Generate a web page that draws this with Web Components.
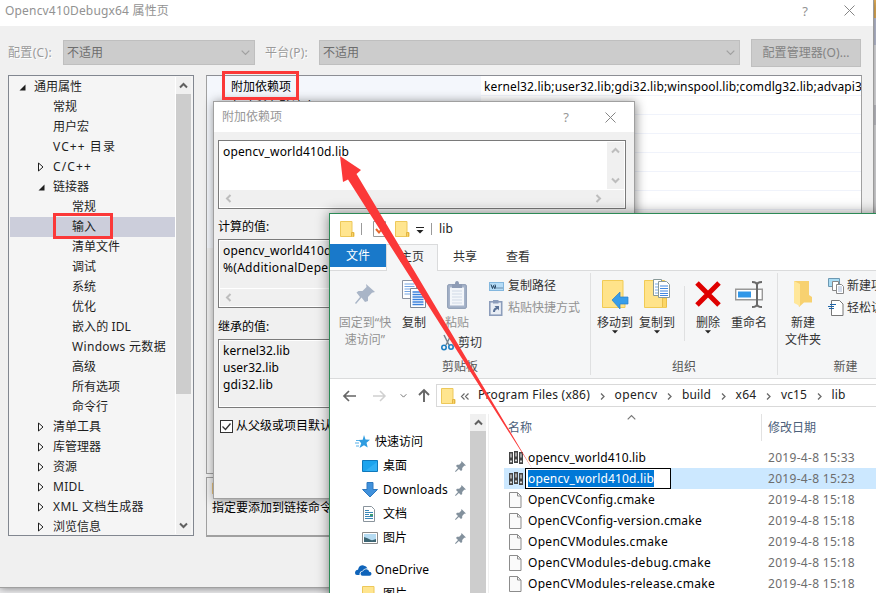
<!DOCTYPE html>
<html lang="zh-CN">
<head>
<meta charset="utf-8">
<title>Opencv410Debugx64 属性页</title>
<style>
  html, body {
    margin: 0;
    width: 876px;
    height: 593px;
    overflow: hidden;
  }

  body {
    position: relative;
    background: linear-gradient(#f0b95f 0 18px, #c9cee4 18px 45px, #f2f2f5 45px 105px, #cfcfd6 105px 125px, #ececee 125px);
    font: 12px/20px "Noto Sans", "Noto Sans CJK SC", sans-serif;
    color: #1e1e1e;
  }

  property-page { position: absolute; left: 0; top: 0; }
  deps-dialog { position: absolute; left: 213px; top: 101px; }
  explorer-window { position: absolute; left: 329px; top: 213px; }
  .mark { position: absolute; box-sizing: border-box; border: 3px solid #fb3838; }
  .arrow { position: absolute; left: 0; top: 0; }
</style>
</head>
<body>
  <property-page></property-page>
  <deps-dialog></deps-dialog>
  <explorer-window></explorer-window>

  <div class="mark" style="left:222px;top:71px;width:77px;height:29px"></div>
  <div class="mark" style="left:53px;top:213px;width:60px;height:26px"></div>
  <svg class="arrow" width="876" height="593">
    <path d="M340 156L361 170L356.5 174L533 470L348 179.5L343 182Z" fill="#fb3838"/>
  </svg>

<script>
const FOLDER = '<path d="M.5 .5h11.5v11h2v4H.5z" fill="#ffe58f" stroke="#edc85a"/><path d="M11.500 15.500v-4h2v4" fill="#f9d36a" stroke="#e3b540"/>';
const PAGE = '<path d="M.5 .5h8l3.500 3.500v11.500H.5z" fill="#fafafa" stroke="#8c8c8c"/><path d="M8.500 .5v3.500h3.500" fill="none" stroke="#8c8c8c"/>';

// [width, height, markup]
const ICONS = {
  close: [11, 11, '<path d="M.5 .5l10 10M10.500 .5l-10 10" stroke="#858585" fill="none"/>'],
  down: [9, 6, '<path d="M.7 .7l3.800 3.800L8.300 .7" fill="none" stroke="currentColor" stroke-width="1.200"/>'],
  up: [9, 6, '<path d="M.7 5.300l3.800-3.800 3.800 3.800" fill="none" stroke="currentColor" stroke-width="1.200"/>'],
  sUp: [9, 7, '<path d="M1 5.500L4.500 2 8 5.500" fill="none" stroke="currentColor" stroke-width="2"/>'],
  sDown: [9, 7, '<path d="M1 1.500L4.500 5 8 1.500" fill="none" stroke="currentColor" stroke-width="2"/>'],
  sLeft: [7, 9, '<path d="M5.500 1L2 4.500 5.500 8" fill="none" stroke="currentColor" stroke-width="2"/>'],
  sRight: [7, 9, '<path d="M1.500 1L5 4.500 1.500 8" fill="none" stroke="currentColor" stroke-width="2"/>'],
  open: [7, 7, '<path d="M6.500 .5v6h-6z" fill="#1e1e1e"/>'],
  closed: [6, 10, '<path d="M.5 1v8L5 5z" fill="#fff" stroke="#1e1e1e"/>'],
  check: [13, 13, '<rect x=".5" y=".5" width="12" height="12" fill="#fff" stroke="#333"/><path d="M2.500 6.500l3 3 5-6" fill="none" stroke="#333" stroke-width="1.300"/>'],
  folder: [14, 16, FOLDER],
  tick: [14, 16, '<path d="M.5 .5h12v15H.5z" fill="#fff" stroke="#999"/><path d="M3 8l3 3.500 4-5" fill="none" stroke="#e8682c" stroke-width="2"/>'],
  menu: [8, 7, '<path d="M0 .5h8" stroke="#222"/><path d="M.5 3h7L4 6.500z" fill="#222"/>'],
  caret: [6, 4, '<path d="M0 .3h6L3 3.500z" fill="#222"/>'],
  pinBig: [20, 20, '<path d="M11 0l9 8-3 .7-4 4.300v4l-3 1-3.500-4.500L1 20l-1-1 5-6L1.500 8.500 3.500 7h4L11.500 3z" fill="#a9b5c7"/>'],
  copyBig: [24, 28, '<path d="M.5 .5h14v18H.5z" fill="#fff" stroke="#8b93a1"/><path d="M2.500 4h10M2.500 6.500h10M2.500 9h10M2.500 11.500h10M2.500 14h10" stroke="#74a5e3"/><path d="M8.500 8.500h11l4 4v15h-15z" fill="#fff" stroke="#7c8796"/><path d="M10.500 12h8M10.500 14.500h11M10.500 17h11M10.500 19.500h11M10.500 22h11M10.500 24.500h11" stroke="#3c82dd" stroke-width="1.400"/>'],
  pasteBig: [20, 29, '<rect x=".7" y="4.700" width="18.600" height="23.600" rx="1" fill="#a7b4ca" stroke="#8494ae"/><path d="M3 7.500h14v18H3z" fill="#f3f6fa"/><path d="M5 11h10M5 14h10M5 17h10M5 20h10M5 23h10" stroke="#d0d9e6"/><path d="M5 4h3a2 3 0 0 1 4 0h3v4H5z" fill="#8e9cb5"/>'],
  cut: [13, 16, '<path d="M3 0l5 10M10 0L5 10" stroke="#78858f" stroke-width="1.500"/><circle cx="3" cy="12.500" r="2.200" fill="none" stroke="#1e7fc2" stroke-width="1.600"/><circle cx="10" cy="12" r="2.200" fill="none" stroke="#1e7fc2" stroke-width="1.600"/>'],
  path: [15, 9, '<rect x=".5" y=".5" width="14" height="8" fill="#b5dcf7" stroke="#83b7de"/><path d="M2 2.500l1.500 4 1-3 1.500 3.500M6 2.500l1 4" stroke="#223f5c" fill="none"/><path d="M8.500 6h1M10.500 6h1M12.500 6h1" stroke="#223f5c"/>'],
  link: [14, 16, '<rect x=".8" y="1.800" width="11.900" height="13.400" fill="#e9eef5" stroke="#8c9dbb" stroke-width="1.600"/><path d="M4 0h5.500v3.500H4z" fill="#8c9dbb"/><path d="M4 12q0-4 3-4.500L5.500 6H10v4.500L8.800 9Q6 9.500 6 12z" fill="#5a7297"/>'],
  moveTo: [26, 29, '<path d="M.5 .5h20.500v18h2v9H.5z" fill="#ffe38a" stroke="#f1cb55"/><path d="M10 21l8-8v5h8v7h-8v5z" fill="#389de9" stroke="#2a7fcb" stroke-width=".7" transform="translate(0 -1)"/>'],
  copyTo: [26, 30, '<path d="M.5 1.500h20v18h2v9H.5z" fill="#ffe38a" stroke="#f1cb55"/><path d="M18.500 28v-9h4v9" fill="#fcd666" stroke="#e9bf4b"/><path d="M9.500 .5h8v16h-8z" fill="#fff" stroke="#899"/><path d="M11 5h5M11 8h5M11 11h5M11 14h5" stroke="#78a9e5"/><path d="M14.500 2.500h8l3 3v13h-11z" fill="#fff" stroke="#899"/><path d="M16 7h8M16 9.500h8M16 12h8M16 14.500h8M16 16.500h8" stroke="#4388e0" stroke-width="1.200"/>'],
  del: [26, 26, '<path d="M2 2l22 22M24 2L2 24" stroke="#df0000" stroke-width="5"/>'],
  rename: [28, 27, '<path d="M.7 8.200h26.600v10.600H.7z" fill="#fff" stroke="#989898" stroke-width="1.400"/><path d="M3 10.500h13v6H3z" fill="#3197e8"/><path d="M17 1q5 0 5 3 0-3 5-3M17 26q5 0 5-3 0 3 5 3M22 3v21" fill="none" stroke="#696969" stroke-width="2"/>'],
  newFolder: [20, 28, '<path d="M1 1h15v14l3 2v5.500h-8L6 27z" fill="#f7d170"/><path d="M1 1l6 3v22l-6-3z" fill="#ffe79a"/>'],
  newItem: [16, 16, '<path d="M.5 .5h11v8H.5z" fill="#a9dcf4" stroke="#6c98b2"/><path d="M4.500 3.500h6v9h-6z" fill="#fff" stroke="#888"/><path d="M8.500 6.500h5l2 2v7h-7z" fill="#fff" stroke="#888"/><path d="M10 9h4M10 11h4M10 13h4" stroke="#a8b8d6"/>'],
  easy: [16, 16, '<path d="M3.500 .5h8l3.500 3.500v11.500H3.500z" fill="#fff" stroke="#777"/><path d="M2 4.500h6M0 6.500h6M1 8.500h5" stroke="#1e64a8" stroke-width="1.200"/>'],
  back: [13, 12, '<path d="M6 1L1 6l5 5M1 6h12" fill="none" stroke="currentColor" stroke-width="1.700"/>'],
  forward: [13, 12, '<path d="M7 1l5 5-5 5M12 6H0" fill="none" stroke="currentColor" stroke-width="1.500"/>'],
  upArrow: [12, 13, '<path d="M1 6l5-5 5 5M6 1v12" fill="none" stroke="currentColor" stroke-width="1.900"/>'],
  crumb: [5, 7, '<path d="M1 .5l3 3-3 3" fill="none" stroke="#6a6a6a" stroke-width="1.300"/>'],
  more: [8, 7, '<path d="M3.500 .5l-3 3 3 3M7.500 .5l-3 3 3 3" fill="none" stroke="#6a6a6a" stroke-width="1.200"/>'],
  star: [15, 14, '<path d="M9 0l1.500 4.500 4.500.3-3.500 3 1.200 4.700L9 10.300 4.500 13l1.700-4.700L3.500 5l4.200-.3z" fill="#2f9ce0"/><path d="M1 5.500h3M0 8h4M1 11h3" stroke="#56b0e8"/>'],
  desktop: [16, 12, '<path d="M.5 .5h15v11H.5z" fill="#1ca4ee" stroke="#0f78bb"/><path d="M15 2v9H3z" fill="#32b0f4"/>'],
  download: [16, 16, '<path d="M5 .5h6v7h4.500L8 15 .5 7.500H5z" fill="#4091dc" stroke="#2e78bf"/>'],
  doc: [14, 16, '<path d="M1.500 .5h8l3 3v12h-11z" fill="#fff" stroke="#8a949c"/><path d="M3 4.500h4M3 6.500h8M3 8.500h4M3 10.500h8M3 12.500h8" stroke="#3a87b8"/><path d="M8 8h3v2H8z" fill="#3a9a72"/>'],
  pic: [16, 12, '<path d="M.5 .5h15v11H.5z" fill="#fff" stroke="#8b8b8b"/><path d="M2 2h12v8H2z" fill="#b5dbf2"/><path d="M2 5q4 1 6 2.500T14 7v3H2z" fill="#3c6573"/>'],
  cloud: [17, 11, '<path d="M0 8q0-3 3-3.200Q4 0 8.500 .4q3 .3 4 3Q9 3 7.300 6q-3 .3-2.800 4H2Q0 10 0 8z" fill="#0f64ba"/><path d="M5.500 8.500q0-2 2.500-2.200 1-2.300 3.500-2 2.300.2 2.700 2.500 2.300.2 2.300 2t-2 2H7.500q-2 0-2-2.300z" fill="#0f64ba"/>'],
  pin: [11, 11, '<path d="M6.500 0L11 4.500l-1.800.3-2 2.200v2L6 10 3.900 8 .7 11 0 10.300 3 7 1 5l1-1.200h2.200l2-2z" fill="#83919d"/>'],
  lib: [14, 13, '<path d="M0 1h4v12H0zM5 0h4v12H5zM10 1h4v12h-4z" fill="#444"/><path d="M1.500 2.500h1v4h-1zM6.500 1.500h1v4h-1zM11.500 2.500h1v4h-1zM1.200 9.500h1.600v1.800H1.200zM6.200 8.500h1.600v1.800H6.200zM11.200 9.500h1.600v1.800h-1.600z" fill="#fff"/>'],
  page: [13, 16, PAGE]
};

class UiIcon extends HTMLElement {
  connectedCallback() {
    if (!this.shadowRoot) this.attachShadow({ mode: 'open' });
    const [w, h, body] = ICONS[this.getAttribute('name')];
    this.shadowRoot.innerHTML = `
      <style>
        :host { display: block; flex: none; width: ${w}px; height: ${h}px; }
        svg { display: block; overflow: visible; }
      </style>
      <svg width="${w}" height="${h}" viewBox="0 0 ${w} ${h}">${body}</svg>`;
  }
}
customElements.define('ui-icon', UiIcon);

// One line of text; "w" spreads the letters over a fixed width
class UiLabel extends HTMLElement {
  connectedCallback() {
    if (!this.shadowRoot) this.attachShadow({ mode: 'open' });
    this.shadowRoot.innerHTML = `
      <style>:host { display: block; flex: none; white-space: nowrap; width: max-content; }</style>
      <slot></slot>`;
    const w = Number(this.getAttribute('w'));
    if (w) {
      const natural = this.getBoundingClientRect().width;
      this.style.letterSpacing = `${(w - natural) / this.textContent.length}px`;
    }
  }
}
customElements.define('ui-label', UiLabel);

class ScrollBar extends HTMLElement {
  connectedCallback() {
    this.attachShadow({ mode: 'open' });
    const horizontal = this.hasAttribute('horizontal');
    const thumb = this.getAttribute('thumb');
    this.shadowRoot.innerHTML = `
      <style>
        :host {
          display: flex;
          flex: none;
          flex-direction: ${horizontal ? 'row' : 'column'};
          justify-content: space-between;
          align-items: center;
          background: #f0f0f0;
          color: #606060;
        }
        :host([disabled]) { color: #bdbdbd; }
        .end { flex: none; display: grid; place-items: center; width: 17px; height: 17px; }
        .thumb { width: 100%; height: ${thumb}px; background: #cdcdcd; margin-bottom: auto; flex: none; }
      </style>
      <div class="end"><ui-icon name="${horizontal ? 'sLeft' : 'sUp'}"></ui-icon></div>
      ${thumb ? '<div class="thumb"></div>' : ''}
      <div class="end"><ui-icon name="${horizontal ? 'sRight' : 'sDown'}"></ui-icon></div>`;
  }
}
customElements.define('scroll-bar', ScrollBar);

class ComboBox extends HTMLElement {
  connectedCallback() {
    this.attachShadow({ mode: 'open' });
    this.shadowRoot.innerHTML = `
      <style>
        :host {
          display: flex;
          align-items: center;
          justify-content: space-between;
          box-sizing: border-box;
          height: 25px;
          padding: 0 4px 0 3px;
          border: 1px solid #bfbfbf;
          background: #ccc;
          color: #6d6d6d;
        }
        ui-icon { color: #a0a0a0; }
      </style>
      <ui-label><slot></slot></ui-label><ui-icon name="down"></ui-icon>`;
  }
}
customElements.define('combo-box', ComboBox);

class TreeItem extends HTMLElement {
  connectedCallback() {
    this.attachShadow({ mode: 'open' });
    const level = Number(this.getAttribute('level'));
    const state = this.getAttribute('state');
    this.shadowRoot.innerHTML = `
      <style>
        :host { display: flex; align-items: center; height: 20px; padding-left: ${9 + level * 19}px; }
        :host([selected]) { background: #cccedb; }
        .toggle { width: 15px; flex: none; }
      </style>
      <div class="toggle">${state ? `<ui-icon name="${state}"></ui-icon>` : ''}</div>
      <ui-label w="${this.getAttribute('w') || ''}">${this.getAttribute('label')}</ui-label>`;
  }
}
customElements.define('tree-item', TreeItem);

const TREE = [
  [0, '通用属性', 'open'], [1, '常规'], [1, '用户宏'], [1, 'VC++ 目录', '', 63], [1, 'C/C++', 'closed', 39],
  [1, '链接器', 'open'], [2, '常规'], [2, '输入', 'selected'], [2, '清单文件'], [2, '调试'], [2, '系统'], [2, '优化'],
  [2, '嵌入的 IDL', '', 59], [2, 'Windows 元数据', '', 94], [2, '高级'], [2, '所有选项'], [2, '命令行'],
  [1, '清单工具', 'closed'], [1, '库管理器', 'closed'], [1, '资源', 'closed'], [1, 'MIDL', 'closed', 31],
  [1, 'XML 文档生成器', 'closed', 91], [1, '浏览信息', 'closed']
];

class PropertyPage extends HTMLElement {
  connectedCallback() {
    this.attachShadow({ mode: 'open' });
    const items = TREE.map(([level, label, state, w]) => {
      const attr = state === 'selected' ? 'selected' : state ? `state="${state}"` : '';
      return `<tree-item level="${level}" label="${label}" w="${w || ''}" ${attr}></tree-item>`;
    }).join('');
    this.shadowRoot.innerHTML = `
      <style>
        :host {
          display: block;
          box-sizing: border-box;
          width: 874px;
          height: 588px;
          border-right: 1px solid #9b9b9b;
          border-bottom: 1px solid #a0a0a0;
          background: #f0f0f0;
          box-shadow: 0 0 8px rgba(0, 0, 0, .5);
        }
        header {
          display: flex;
          align-items: center;
          box-sizing: border-box;
          height: 26px;
          padding: 0 18px 5px 5px;
          background: #fff;
          color: #929292;
        }
        .help { margin-left: auto; margin-right: 36px; font-size: 13px; }
        .config { display: flex; align-items: flex-start; padding: 14px 0 0 8px; height: 35px; }
        .config ui-label { margin-top: 3px; color: #9a9a9a; text-shadow: 1px 1px #fff; }
        .c1 { width: 192px; margin-left: 11px; }
        .p { margin-left: 10px; }
        .c2 { width: 421px; margin-left: 11px; }
        .btn {
          box-sizing: border-box;
          width: 110px;
          height: 28px;
          margin: -1px 0 0 11px;
          border: 1px solid #bfbfbf;
          background: #ccc;
          display: grid;
          place-items: center;
        }
        .config .btn ui-label { margin: 0; color: #838383; text-shadow: none; }
        .main { display: flex; gap: 12px; padding-left: 8px; }
        .tree {
          display: flex;
          box-sizing: border-box;
          width: 186px;
          height: 461px;
          border: 1px solid #828790;
          padding: 1px;
          background: #f5f5f5;
          overflow: hidden;
        }
        .items { flex: 1; }
        .tree scroll-bar { width: 16px; border-left: 1px solid #fff; margin-right: 1px; box-sizing: border-box; }
        .right { display: flex; flex-direction: column; gap: 3px; width: 656px; }
        .grid {
          box-sizing: border-box;
          height: 399px;
          border: 1px solid #a0a0a0;
          border-top-color: #8c8e94;
          overflow: hidden;
          display: grid;
          grid-template-columns: 274px 1fr;
          background: linear-gradient(90deg, #f4f7fc 274px, transparent 0) 0 0 / 100% 172px no-repeat, #f0f0f0;
        }
        .names { padding: 1px 0 0 24px; color: #000; }
        .names ui-label { height: 20px; }
        .values {
          padding: 1px 0 0 3px;
          color: #000;
          background: repeating-linear-gradient(#fff 0 18px, #f0f3fb 18px 19px) 0 1px;
        }
        .desc {
          box-sizing: border-box;
          height: 60px;
          border: 1px solid #a0a0a0;
          border-bottom-width: 2px;
          padding: 1px 0 0 5px;
          color: #000;
        }
        .desc ui-label { line-height: 19px; }
        .desc b { display: block; height: 17px; padding-top: 2px; line-height: 16px; }
      </style>
      <header>
        <ui-label w="164">Opencv410Debugx64 属性页</ui-label>
        <ui-label class="help">?</ui-label>
        <ui-icon name="close"></ui-icon>
      </header>
      <div class="config">
        <ui-label w="44">配置(C):</ui-label>
        <combo-box class="c1">不适用</combo-box>
        <ui-label class="p" w="43">平台(P):</ui-label>
        <combo-box class="c2">不适用</combo-box>
        <div class="btn"><ui-label w="87">配置管理器(O)...</ui-label></div>
      </div>
      <div class="main">
        <div class="tree">
          <div class="items">${items}</div>
          <scroll-bar thumb="300"></scroll-bar>
        </div>
        <div class="right">
          <div class="grid">
            <div class="names"><ui-label>附加依赖项</ui-label><ui-label>忽略所有默认库</ui-label></div>
            <div class="values"><ui-label w="378">kernel32.lib;user32.lib;gdi32.lib;winspool.lib;comdlg32.lib;advapi3</ui-label></div>
          </div>
          <div class="desc"><b>附加依赖项</b><ui-label>指定要添加到链接命令</ui-label></div>
        </div>
      </div>`;
  }
}
customElements.define('property-page', PropertyPage);

class TextArea extends HTMLElement {
  connectedCallback() {
    this.attachShadow({ mode: 'open' });
    const vertical = this.hasAttribute('vertical');
    const horizontal = this.hasAttribute('scroll');
    this.shadowRoot.innerHTML = `
      <style>
        :host {
          display: flex;
          flex-direction: column;
          box-sizing: border-box;
          height: 69px;
          border: 1px solid #7a7a7a;
          box-shadow: inset 0 0 0 1px #fff;
          padding: 1px;
          color: #000;
          line-height: 17px;
        }
        :host([vertical]) { background: #fff; }
        .top { display: flex; flex: 1; justify-content: space-between; min-height: 0; }
        .text { padding: 1px 0 0 3px; }
        .v { width: 17px; }
        .h { height: 17px; border-top: 1px solid #fff; padding-right: ${vertical ? 17 : 0}px; }
      </style>
      <div class="top"><div class="text"><slot></slot></div>
      ${vertical ? '<scroll-bar class="v" disabled></scroll-bar>' : ''}</div>
      ${horizontal ? '<scroll-bar class="h" horizontal disabled></scroll-bar>' : ''}`;
  }
}
customElements.define('text-area', TextArea);

class DepsDialog extends HTMLElement {
  connectedCallback() {
    this.attachShadow({ mode: 'open' });
    this.shadowRoot.innerHTML = `
      <style>
        :host {
          display: block;
          box-sizing: border-box;
          width: 422px;
          height: 398px;
          border: 1px solid #a0a0a0;
          background: #f0f0f0;
          color: #000;
          box-shadow: 1px 1px 10px rgba(0, 0, 0, .45);
        }
        header {
          display: flex;
          align-items: center;
          height: 30px;
          padding: 0 18px 0 8px;
          background: #fff;
          color: #979797;
        }
        .help { margin-left: auto; margin-right: 36px; font-size: 13px; }
        .body { padding: 8px 8px 0 4px; }
        .caption { height: 20px; padding: 8px 0 2px; }
        .caption.inherited { padding-top: 9px; }
        .check { display: flex; align-items: center; gap: 3px; padding: 8px 0 0 2px; }
      </style>
      <header>
        <ui-label>附加依赖项</ui-label>
        <ui-label class="help">?</ui-label>
        <ui-icon name="close"></ui-icon>
      </header>
      <div class="body">
        <text-area vertical scroll><ui-label w="126">opencv_world410d.lib</ui-label></text-area>
        <ui-label class="caption">计算的值:</ui-label>
        <text-area scroll>
          <ui-label w="126">opencv_world410d.lib</ui-label>
          <ui-label w="162">%(AdditionalDependencies)</ui-label>
        </text-area>
        <ui-label class="caption inherited">继承的值:</ui-label>
        <text-area>
          <ui-label w="67">kernel32.lib</ui-label>
          <ui-label w="56">user32.lib</ui-label>
          <ui-label w="50">gdi32.lib</ui-label>
        </text-area>
        <div class="check"><ui-icon name="check"></ui-icon><ui-label>从父级或项目默认设置继承</ui-label></div>
      </div>`;
  }
}
customElements.define('deps-dialog', DepsDialog);

class RibbonButton extends HTMLElement {
  connectedCallback() {
    this.attachShadow({ mode: 'open' });
    this.shadowRoot.innerHTML = `
      <style>
        :host { display: flex; flex-direction: column; align-items: center; flex: none; line-height: 17px; color: #333; text-align: center; }
        :host([disabled]) { color: #929292; }
        .pic { display: grid; place-items: center; height: 36px; padding-top: 6px; box-sizing: border-box; }
        .label { padding-top: 5px; white-space: pre; }
        .drop { margin-top: -1px; }
      </style>
      <div class="pic"><ui-icon name="${this.getAttribute('icon')}"></ui-icon></div>
      <div class="label"><slot></slot></div>
      ${this.hasAttribute('drop') ? '<ui-icon class="drop" name="caret"></ui-icon>' : ''}`;
  }
}
customElements.define('ribbon-button', RibbonButton);

class RibbonLine extends HTMLElement {
  connectedCallback() {
    this.attachShadow({ mode: 'open' });
    this.shadowRoot.innerHTML = `
      <style>
        :host { display: grid; grid-template-columns: 19px auto; align-items: center; height: 22px; color: #333; }
        :host([disabled]) { color: #929292; }
      </style>
      <ui-icon name="${this.getAttribute('icon')}"></ui-icon><ui-label><slot></slot></ui-label>`;
  }
}
customElements.define('ribbon-line', RibbonLine);

class NavItem extends HTMLElement {
  connectedCallback() {
    this.attachShadow({ mode: 'open' });
    this.shadowRoot.innerHTML = `
      <style>
        :host { display: flex; align-items: center; height: 24px; padding-left: 32px; color: #000; }
        :host([root]) { padding-left: 25px; }
        .icon { width: 21px; }
        :host([root]) .icon { width: 20px; }
        .pin { margin: 0 4px 0 auto; }
      </style>
      <div class="icon"><ui-icon name="${this.getAttribute('icon')}"></ui-icon></div>
      <ui-label w="${this.getAttribute('w') || ''}">${this.getAttribute('label')}</ui-label>
      ${this.hasAttribute('pinned') ? '<ui-icon class="pin" name="pin"></ui-icon>' : ''}`;
  }
}
customElements.define('nav-item', NavItem);

class FileRow extends HTMLElement {
  connectedCallback() {
    this.attachShadow({ mode: 'open' });
    this.shadowRoot.innerHTML = `
      <style>
        :host { display: grid; grid-template-columns: 16px 243px 1fr; align-items: center; height: 21px; padding-left: 5px; color: #000; }
        :host([editing]) { background: #cce8ff; }
        .name { padding-left: 3px; }
        :host([editing]) .name {
          box-sizing: border-box;
          width: 146px;
          height: 21px;
          padding: 1px 2px;
          border: 1px solid #000;
          background: #fff;
          color: #fff;
        }
        :host([editing]) .name ui-label { background: #0078d7; line-height: 17px; }
        .date { color: #6d6d6d; }
      </style>
      <ui-icon name="${this.getAttribute('icon')}"></ui-icon>
      <div class="name"><ui-label w="${this.getAttribute('w')}">${this.getAttribute('name')}</ui-label></div>
      <ui-label class="date" w="87">${this.getAttribute('date')}</ui-label>`;
  }
}
customElements.define('file-row', FileRow);

const FILES = [
  ['opencv_world410.lib', '2019-4-8 15:33', 118, 'lib'],
  ['opencv_world410d.lib', '2019-4-8 15:23', 126, 'lib'],
  ['OpenCVConfig.cmake', '2019-4-8 15:18', 127, 'page'],
  ['OpenCVConfig-version.cmake', '2019-4-8 15:18', 174, 'page'],
  ['OpenCVModules.cmake', '2019-4-8 15:18', 140, 'page'],
  ['OpenCVModules-debug.cmake', '2019-4-8 15:18', 183, 'page'],
  ['OpenCVModules-release.cmake', '2019-4-8 15:18', 187, 'page']
];

const CRUMBS = [['Program Files (x86)', 112], ['opencv', 43], ['build', 29], ['x64', 21], ['vc15', 26], ['lib', 14]];

class ExplorerWindow extends HTMLElement {
  connectedCallback() {
    this.attachShadow({ mode: 'open' });
    const files = FILES.map(([name, date, w, icon], i) =>
      `<file-row name="${name}" date="${date}" w="${w}" icon="${icon}" ${i === 1 ? 'editing' : ''}></file-row>`).join('');
    const crumbs = CRUMBS.map(([text, w]) => `<ui-label w="${w}">${text}</ui-label>`)
      .join('<ui-icon name="crumb"></ui-icon>');
    this.shadowRoot.innerHTML = `
      <style>
        :host {
          display: block;
          box-sizing: border-box;
          width: 560px;
          height: 390px;
          border: 1px solid #2c8a56;
          background: #fff;
          color: #222;
          box-shadow: 0 0 12px rgba(0, 0, 0, .45);
          overflow: hidden;
        }
        .title { display: flex; align-items: center; height: 30px; padding-left: 10px; }
        .bar { width: 1px; height: 12px; background: #9a9a9a; margin: 0 11px 0 7px; }
        .title .menu { margin: 2px 0 0 7px; }
        .tabs { display: flex; height: 26px; border-bottom: 1px solid #dadbdc; line-height: 25px; color: #333; }
        .file { width: 56px; height: 23px; line-height: 24px; text-align: center; background: #1979ca; color: #fff; }
        .home { box-sizing: border-box; width: 52px; height: 27px; padding-left: 13px; margin-right: 15px; border: solid #dadbdc; border-width: 1px 1px 0; background: #f5f6f7; line-height: 23px; }
        .tabs ui-label { margin-right: 29px; }
        .ribbon { display: flex; height: 107px; background: #f5f6f7; border-bottom: 1px solid #dadbdc; color: #333; }
        .group { box-sizing: border-box; display: flex; flex: none; flex-direction: column; justify-content: space-between; height: 102px; margin-top: 2px; border-right: 1px solid #dfe0e1; }
        .group > span { text-align: center; line-height: 17px; color: #555; }
        .tools { display: flex; align-items: flex-start; }
        .clip { width: 261px; }
        .org { width: 187px; }
        .new { width: 136px; }
        .cut { grid-template-columns: 17px auto; }
        .sep { width: 1px; height: 55px; margin: 13px 10px 0 8px; background: #dfe0e1; }
        .address { display: flex; align-items: center; height: 33px; margin-bottom: 2px; color: #666; padding-left: 13px; }
        .box {
          display: flex;
          align-items: center;
          box-sizing: border-box;
          width: 460px;
          height: 23px;
          margin-left: 6px;
          padding-left: 4px;
          border: 1px solid #d9d9d9;
          color: #222;
        }
        .box ui-label { margin-top: -1px; }
        .box ui-icon[name=crumb] { margin: 1px 10px 0 9.5px; }
        .content { display: flex; height: 181px; }
        nav { width: 140px; padding-top: 16px; box-sizing: border-box; height: 181px; overflow: hidden; }
        .gap { height: 8px; }
        .navbar { width: 16px; height: 300px; }
        .files { flex: 1; margin-left: 2px; border-left: 1px solid #f0f0f0; }
        .head { display: flex; height: 27px; line-height: 27px; color: #4c607a; margin-bottom: 6px; padding-left: 19px; }
        .sort { color: #777; margin: 0 auto 0 95px; }
        .date { box-sizing: border-box; width: 127px; padding-left: 6px; border-left: 1px solid #e2e2e2; }
        .rows { padding-left: 15px; }
      </style>
      <div class="title">
        <ui-icon name="folder"></ui-icon><div class="bar"></div><ui-icon name="tick"></ui-icon>
        <ui-icon name="folder" style="margin-left:8px"></ui-icon><ui-icon class="menu" name="menu"></ui-icon>
        <div class="bar" style="margin-right:7px"></div><ui-label w="14">lib</ui-label>
      </div>
      <div class="tabs">
        <div class="file">文件</div><div class="home">主页</div>
        <ui-label>共享</ui-label><ui-label>查看</ui-label>
      </div>
      <div class="ribbon">
        <div class="group clip">
          <div class="tools">
            <ribbon-button icon="pinBig" disabled style="width:70px">固定到“快
速访问”</ribbon-button>
            <ribbon-button icon="copyBig" style="width:28px">复制</ribbon-button>
            <div style="width:62px">
              <ribbon-button icon="pasteBig" disabled style="width:58px">粘贴</ribbon-button>
              <ribbon-line icon="cut" class="cut" style="margin:1px 0 0 13px">剪切</ribbon-line>
            </div>
            <div style="padding-top:2px;margin-left:-1px">
              <ribbon-line icon="path">复制路径</ribbon-line>
              <ribbon-line icon="link" disabled>粘贴快捷方式</ribbon-line>
            </div>
          </div>
          <span>剪贴板</span>
        </div>
        <div class="group org">
          <div class="tools" style="padding-left:5px">
            <ribbon-button icon="moveTo" drop style="width:38px;margin-right:4px;--shift:2px">移动到</ribbon-button>
            <ribbon-button icon="copyTo" drop style="width:38px">复制到</ribbon-button>
            <div class="sep"></div>
            <ribbon-button icon="del" drop style="width:26px;margin-right:9px">删除</ribbon-button>
            <ribbon-button icon="rename" style="width:38px">重命名</ribbon-button>
          </div>
          <span>组织</span>
        </div>
        <div class="group new">
          <div class="tools" style="padding-left:7px">
            <ribbon-button icon="newFolder" style="width:36px">新建
文件夹</ribbon-button>
            <div style="padding:2px 0 0 7px">
              <ribbon-line icon="newItem">新建项目</ribbon-line>
              <ribbon-line icon="easy">轻松访问</ribbon-line>
            </div>
          </div>
          <span>新建</span>
        </div>
      </div>
      <div class="address">
        <ui-icon name="back"></ui-icon>
        <ui-icon name="forward" style="color:#d0d0d0;margin-left:17px"></ui-icon>
        <ui-icon name="down" style="transform:scale(.75);margin:0 10px 0 13px"></ui-icon>
        <ui-icon name="upArrow"></ui-icon>
        <div class="box"><ui-icon name="folder"></ui-icon>
          <ui-icon name="more" style="margin:1px 9px 0 6px"></ui-icon>${crumbs}</div>
      </div>
      <div class="content">
        <nav>
          <nav-item root icon="star" label="快速访问"></nav-item>
          <nav-item icon="desktop" label="桌面" pinned></nav-item>
          <nav-item icon="download" label="Downloads" w="65" pinned></nav-item>
          <nav-item icon="doc" label="文档" pinned></nav-item>
          <nav-item icon="pic" label="图片" pinned></nav-item>
          <div class="gap"></div>
          <nav-item root icon="cloud" label="OneDrive" w="54"></nav-item>
          <nav-item icon="folder" label="图片"></nav-item>
        </nav>
        <scroll-bar class="navbar" thumb="260"></scroll-bar>
        <div class="files">
          <div class="head">
            <ui-label>名称</ui-label><ui-icon class="sort" name="up"></ui-icon>
            <div class="date">修改日期</div>
          </div>
          <div class="rows">${files}</div>
        </div>
      </div>`;
  }
}
customElements.define('explorer-window', ExplorerWindow);
</script>
</body>
</html>
